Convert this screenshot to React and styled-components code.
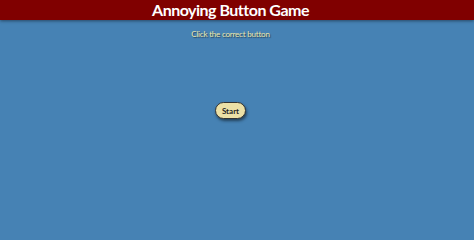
import React from 'react';
import styled, { createGlobalStyle } from 'styled-components';

const GlobalStyle = createGlobalStyle`
  html, body {
    margin: 0;
    padding: 0;
    background: #4682b4;
    overflow: hidden;
  }
`;

const Page = styled.div`
  height: 214px;
  display: flex;
  flex-direction: column;
  align-items: center;
  background: #4682b4;
  font-family: Lato, "Liberation Sans", sans-serif;
`;

const Header = styled.header`
  width: 100%;
  height: 20px;
  box-sizing: border-box;
  padding-right: 13px;
  background: #800000;
  box-shadow: 0 1px 3px rgba(0, 0, 0, 0.45);
  display: flex;
  justify-content: center;
  align-items: center;
`;

const Content = styled.main`
  width: 100%;
  box-sizing: border-box;
  padding-right: 13px;
  display: flex;
  flex-direction: column;
  align-items: center;
`;

const Title = styled.h1`
  margin: 0;
  color: #fff;
  font-size: 16px;
  font-weight: 700;
  letter-spacing: -0.5px;
  line-height: 20px;
`;

const Subtitle = styled.p`
  margin: 9px 0 0;
  color: #eee8aa;
  font-size: 8px;
  letter-spacing: -0.2px;
  line-height: 10px;
  text-shadow: 1px 1px 1px rgba(0, 0, 0, 0.5);
`;

const Stage = styled.div`
  height: 80px;
  display: flex;
  align-items: flex-end;
`;

const StartButton = styled.button`
  width: 31px;
  height: 17px;
  padding: 0;
  border: 1px solid #333;
  border-radius: 9px;
  background: #ece0a6;
  color: #1e1e1e;
  font-family: inherit;
  font-size: 8px;
  font-weight: 700;
  box-shadow: 1px 2px 3px rgba(0, 0, 0, 0.5);
  cursor: pointer;
`;

export default function App() {
  return (
    <>
      <GlobalStyle />
      <Page>
        <Header>
          <Title>Annoying Button Game</Title>
        </Header>
        <Content>
          <Subtitle>Click the correct button</Subtitle>
          <Stage>
            <StartButton>Start</StartButton>
          </Stage>
        </Content>
      </Page>
    </>
  );
}
